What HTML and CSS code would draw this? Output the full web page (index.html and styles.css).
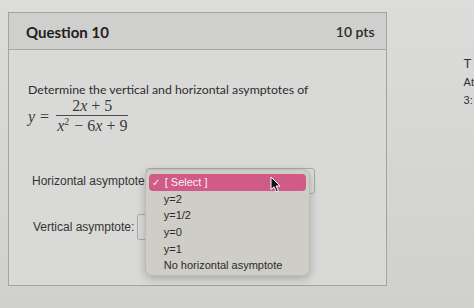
FILE: index.html
```html
<!DOCTYPE html>
<html>
<head>
<meta charset="utf-8">
<link rel="stylesheet" href="styles.css">
</head>
<body>
<div class="page">
  <div class="card">
    <div class="card-head">
      <span class="q-title">Question 10</span>
      <span class="q-pts">10 pts</span>
    </div>
    <div class="card-body">
      <p class="prompt">Determine the vertical and horizontal asymptotes of</p>
      <div class="math">
        <span class="mi">y</span><span class="eq">=</span>
        <span class="frac">
          <span class="num">2<i>x</i> + 5</span>
          <span class="den"><i>x</i><sup>2</sup> − 6<i>x</i> + 9</span>
        </span>
      </div>
      <div class="row row-h">
        <span class="lbl">Horizontal asymptote</span>
        <span class="select">
          <span class="caret">⌄</span>
          <span class="menu">
            <span class="opt sel"><span class="chk">✓</span>[ Select ]</span>
            <span class="opt">y=2</span>
            <span class="opt">y=1/2</span>
            <span class="opt">y=0</span>
            <span class="opt">y=1</span>
            <span class="opt">No horizontal asymptote</span>
            <svg class="cursor" width="12" height="17" viewBox="0 0 12 17"><path d="M1 1 L1 13.5 L4 10.8 L6.3 15.8 L8.3 14.9 L6.1 10 L10 10 Z" fill="#111" stroke="#fff" stroke-width="1" stroke-linejoin="round"/></svg>
          </span>
        </span>
      </div>
      <div class="row row-v">
        <span class="lbl">Vertical asymptote:</span>
        <span class="input"></span>
      </div>
    </div>
  </div>
  <div class="side">
    <div class="side-t">T</div>
    <div class="side-s">At</div>
    <div class="side-s">3:</div>
  </div>
</div>
</body>
</html>
```

FILE: styles.css
```css
html, body {
  margin: 0;
  padding: 0;
}
body {
  width: 474px;
  height: 308px;
  overflow: hidden;
  background: linear-gradient(180deg, #dcdddb 0%, #d6d7d3 50%, #d0d1cd 100%);
  font-family: "Lato", "Liberation Sans", sans-serif;
  color: #2a2b2b;
}
.page {
  display: flex;
  padding: 12px 0 0 8px;
}
.card {
  width: 382px;
  height: 274px;
  border: 1px solid #a3a4a1;
  box-sizing: border-box;
  background: #d9dad7;
  display: flex;
  flex-direction: column;
}
.card-head {
  height: 37px;
  box-sizing: border-box;
  border-bottom: 1px solid #a7a8a5;
  background: #cfd0cd;
  display: flex;
  align-items: center;
  justify-content: space-between;
  padding: 1px 11px 0 17px;
}
.q-title {
  font-weight: 700;
  font-size: 15px;
  color: #1f2020;
}
.q-pts {
  font-size: 14px;
  font-weight: 600;
  color: #2a2b2b;
}
.card-body {
  padding: 32px 0 0 19px;
}
.prompt {
  margin: 0;
  font-size: 12.3px;
  line-height: 15px;
  color: #2c2d2d;
}
.math {
  display: flex;
  align-items: center;
  margin-top: 1px;
  font-family: "Liberation Serif", serif;
  font-size: 16px;
  color: #3a3b3b;
}
.mi {
  font-style: italic;
  margin-top: 2px;
}
.eq {
  margin: 2px 7px 0 5px;
}
.frac {
  display: inline-flex;
  flex-direction: column;
  align-items: center;
}
.num {
  padding: 0 2px 1px;
  line-height: 16px;
}
.den {
  border-top: 1px solid #4a4b4b;
  padding: 1px 1px 0;
  line-height: 17px;
}
.den sup {
  font-size: 10px;
  line-height: 0;
  margin-right: 1px;
}
.row {
  display: flex;
  align-items: center;
  font-family: "Liberation Sans", sans-serif;
  font-size: 12px;
  color: #333;
}
.row-h {
  margin-top: 34px;
  padding-left: 4px;
}
.row-v {
  margin-top: 20px;
  padding-left: 5px;
}
.select {
  position: relative;
  margin-left: 1px;
  width: 169px;
  height: 26px;
  box-sizing: border-box;
  border: 1px solid #aaaba8;
  border-radius: 3px;
  background: #dcdcda;
}
.caret {
  position: absolute;
  right: 2px;
  top: 4px;
  font-size: 9px;
  color: #555;
}
.menu {
  position: absolute;
  left: -2px;
  top: 0;
  width: 165px;
  height: 107px;
  box-sizing: border-box;
  padding: 4px 3px 0;
  background: #cfcec6;
  border: 1px solid #bdbcb4;
  border-radius: 7px;
  box-shadow: 0 3px 10px rgba(0, 0, 0, 0.22);
  display: flex;
  flex-direction: column;
}
.opt {
  height: 16.7px;
  line-height: 16.7px;
  padding-left: 15px;
  font-size: 11px;
  color: #2a2a2a;
  white-space: nowrap;
}
.opt.sel {
  background: #d05b89;
  color: #fbeef3;
  border-radius: 4px;
  padding-left: 3px;
}
.chk {
  display: inline-block;
  width: 13px;
  font-size: 10px;
}
.cursor {
  position: absolute;
  left: 124px;
  top: 6px;
}
.input {
  margin-left: 3px;
  width: 169px;
  height: 26px;
  box-sizing: border-box;
  border: 1px solid #a9aaa7;
  border-radius: 2px;
  background: #dadbd8;
}
.side {
  margin-left: 77px;
  padding-top: 43px;
  font-family: "Liberation Sans", sans-serif;
  color: #333;
}
.side-t {
  font-size: 13px;
  line-height: 18px;
}
.side-s {
  font-size: 11px;
  line-height: 18px;
}
```
